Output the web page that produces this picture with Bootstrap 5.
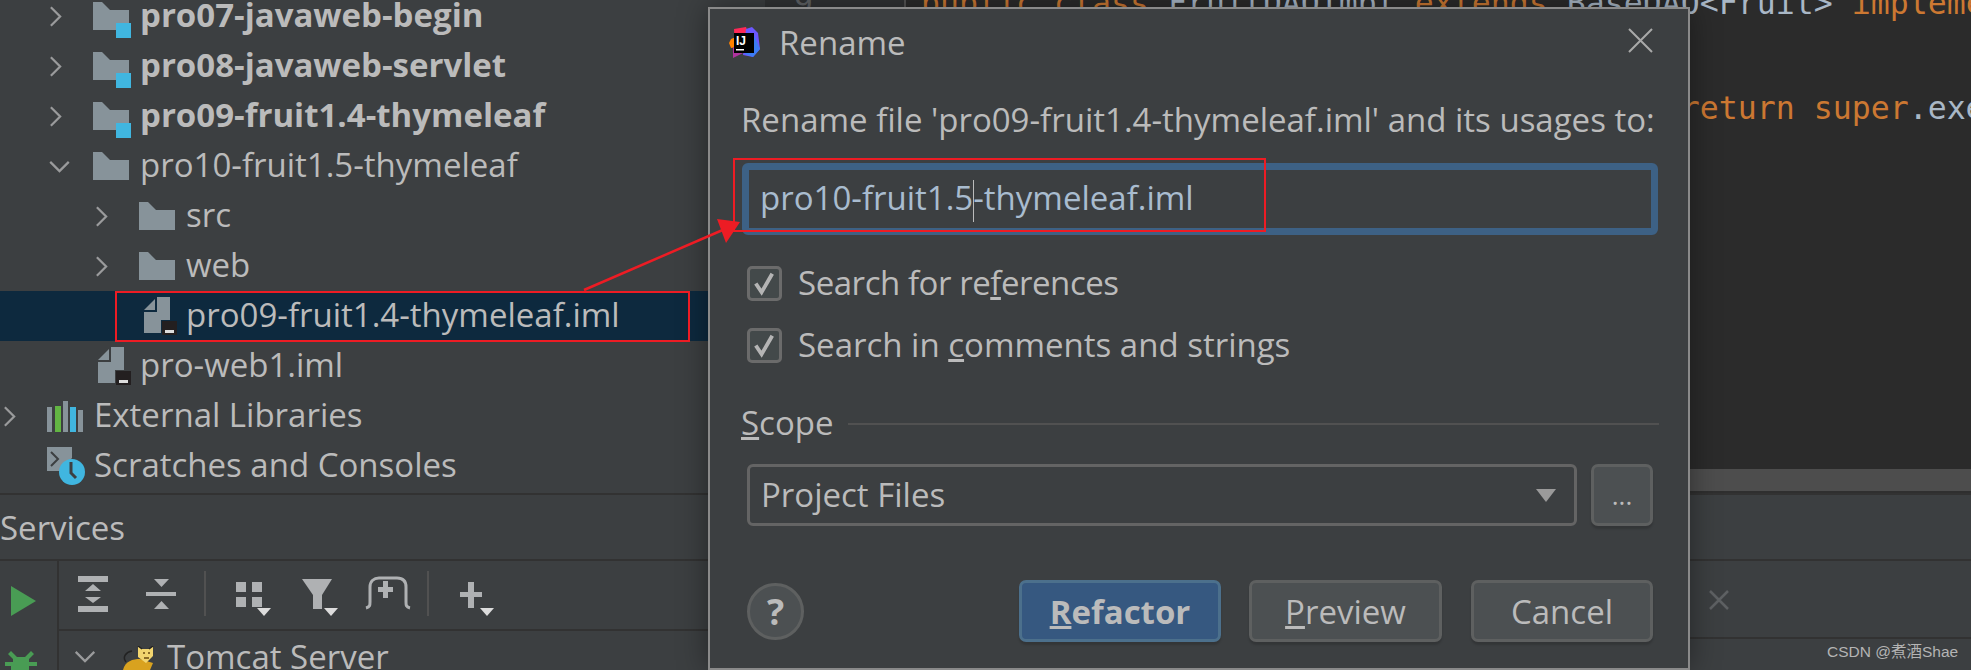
<!DOCTYPE html>
<html lang="en">
<head>
<meta charset="UTF-8">
<title>Rename</title>
<link href="https://cdn.jsdelivr.net/npm/bootstrap@5.3.0/dist/css/bootstrap.min.css" rel="stylesheet">
<script src="https://cdn.jsdelivr.net/npm/bootstrap@5.3.0/dist/js/bootstrap.bundle.min.js"></script>
<style>
html, body { width: 1971px; height: 670px; overflow: hidden; background: #3c3f41; }
body { font-family: "Open Sans", "Noto Sans", sans-serif; font-size: 33px; color: #bbb; position: relative; }
svg { display: block; flex: none; }

/* project tree */
.ide-top { height: 493px; }
.tree-pane { width: 765px; flex: none; overflow: hidden; }
.tree-list { margin-top: -9px; }
.tree-row { height: 50px; white-space: nowrap; }
.tree-row > span { position: relative; top: -1px; }
.tree-row.is-sel { background: #0d293e; }
.lv-1 { padding-left: 46px; }
.lv-2 { padding-left: 92px; }
.chev-slot { width: 47px; padding-left: 3px; flex: none; }
.icon-slot { width: 47px; flex: none; position: relative; line-height: 0; }
.file-shift { margin-left: 5px; }
.fw-mod { font-weight: 700; }
.mod-dot { position: absolute; left: 23px; top: 21px; width: 15px; height: 15px; background: #40b6e0; }

/* editor */
.gutter { width: 141px; flex: none; background: #313335; border-right: 2px solid #555; color: #606366; font-family: "DejaVu Sans Mono", monospace; font-size: 31.5px; line-height: 52px; overflow: hidden; }
.gutter-num { margin-top: -23px; padding-left: 29px; }
.editor { background: #2b2b2b; min-width: 0; border-bottom: 2px solid #2f2f2f; }
.code-area { padding-left: 15px; margin-top: -23px; font-family: "DejaVu Sans Mono", monospace; font-size: 31.55px; line-height: 52px; color: #a9b7c6; white-space: pre; overflow: hidden; }
.code-gap { height: 53px; }
.kw { color: #cc7832; }
.h-scroll { height: 22px; background: #4d4d4d; flex: none; }

/* services */
.svc-head { height: 68px; border-top: 2px solid #323232; border-bottom: 2px solid #323232; line-height: 65px; }
.svc-rail { width: 59px; flex: none; border-right: 2px solid #323232; }
.rail-play { margin: 25px 0 0 11px; }
.rail-bug { margin: 35px 0 0 5px; }
.svc-main { min-width: 0; }
.svc-bar { height: 70px; border-bottom: 2px solid #323232; }
.svc-right { width: 282px; flex: none; }
.svc-right-bar { height: 78px; border-bottom: 2px solid #323232; padding: 29px 0 0 20px; }
.svc-tree-row { padding: 0 0 0 14px; height: 38px; white-space: nowrap; }
.tomcat-ico { margin: 15px 0 0 26px; }
.tomcat-chev { margin-top: 19px; }
.tomcat-name { margin-left: 10px; line-height: 52px; }

/* rename dialog */
.rn-dialog { position: absolute; left: 708px; top: 7px; width: 982px; height: 663px; background: #3c3f41; border: 2px solid #8a8a8a; box-shadow: 0 0 28px rgba(0,0,0,.4); padding: 18px 29px 0 31px; }
.rn-title { height: 31px; }
.rn-logo { margin-left: -12px; }
.rn-title-text { margin-left: 19px; }
.rn-close { margin-left: auto; margin-top: -4px; margin-right: 6px; }
.rn-label { height: 40px; line-height: 40px; margin-top: 42px; white-space: nowrap; }
.rn-input.form-control { margin: 23px 0 0 1px; height: 72px; width: 916px; padding: 0 0 0 11px; background: #3c3f41; border: 7px solid #3d6185; border-radius: 6px; color: #a9bccf; font-size: 33px; line-height: 56px; white-space: nowrap; box-shadow: none; }
.rn-caret { display: inline-block; width: 0; height: 42px; border-left: 1.5px solid #bbb; vertical-align: middle; margin: 0 -1px 0 0; }
.rn-checks .form-check { display: flex; align-items: center; height: 40px; margin: 0 0 0 6px; padding: 0; }
.rn-checks .form-check:first-child { margin-top: 28px; }
.rn-checks .form-check + .form-check { margin-top: 22px; }
.rn-check.form-check-input { width: 35px; height: 35px; margin: 0 16px 0 0; float: none; background-color: #43494a; border: 3px solid #6b6b6b; border-radius: 5px; background-size: 100%; box-shadow: none; opacity: 1; flex: none; }
.rn-check.form-check-input:checked { background-color: #43494a; border-color: #6b6b6b; background-image: url("data:image/svg+xml,%3csvg xmlns='http://www.w3.org/2000/svg' viewBox='0 0 30 30'%3e%3cpath fill='none' stroke='%23b4b4b4' stroke-width='4' d='M6 15l6 9 11-19'/%3e%3c/svg%3e"); }
.rn-check-label { color: #bbb; opacity: 1; }
.rn-check-label, .rn-check { cursor: default; }
.rn-tight { letter-spacing: -.45px; }
.rn-scope { height: 40px; line-height: 40px; margin-top: 38px; }
.rn-rule { height: 2px; background: #515151; margin: 2px 0 0 14px; }
.rn-scope-row { margin: 21px 6px 0 6px; gap: 14px; }
.rn-select.form-select { flex: 1 1 auto; width: auto; height: 62px; padding: 0 0 0 11px; background-color: #3c3f41; border: 3px solid #646464; border-radius: 6px; color: #bbb; font-size: 33px; box-shadow: none; background-size: 20px 13px; background-position: right 18px center; background-image: url("data:image/svg+xml,%3csvg xmlns='http://www.w3.org/2000/svg' viewBox='0 0 20 13'%3e%3cpath fill='%239a9a9a' d='M0 0h20L10 13z'/%3e%3c/svg%3e"); }
.rn-btn.btn { background: #4c5052; border: 3px solid #5e6060; border-radius: 7px; color: #bbb; font-size: 33px; height: 62px; line-height: 1; padding: 0; box-shadow: 0 3px 2px rgba(0,0,0,.15); }
.rn-more.btn { width: 62px; line-height: 56px; font-size: 26px; }
.rn-foot { margin: 54px 6px 0 6px; }
.rn-help.btn { width: 57px; height: 57px; border-radius: 50%; background: #4c5052; border: 3px solid #5e6060; color: #bbb; font-size: 36px; font-weight: 700; line-height: 1; padding: 0; margin-top: 3px; }
.rn-ok.btn { background: #365880; border-color: #4c708c; font-weight: 700; width: 202px; margin-left: auto; }
.rn-prev.btn { width: 193px; margin-left: 28px; }
.rn-cancel.btn { width: 182px; margin-left: 29px; }

/* red markup drawn over the screenshot */
.mark-box { position: absolute; border: 2px solid #ed1c24; pointer-events: none; }
.mark-row { left: 115px; top: 291px; width: 575px; height: 51px; }
.mark-input { left: 733px; top: 158px; width: 533px; height: 74px; }
.mark-arrow { position: absolute; left: 570px; top: 210px; }
.wm { position: absolute; left: 1827px; top: 641px; font: 15.5px/22px "Liberation Sans", "Noto Sans CJK SC", sans-serif; color: #b4b4b4; white-space: nowrap; }
</style>
</head>
<body>
<svg width="0" height="0" class="position-absolute">
  <defs>
    <symbol id="chev-r" viewBox="0 0 14 22"><path d="M2 1l10 10L2 21" fill="none" stroke="#9a9b9c" stroke-width="2.4"/></symbol>
    <symbol id="chev-d" viewBox="0 0 22 14"><path d="M1 2l10 10L21 2" fill="none" stroke="#9a9b9c" stroke-width="2.4"/></symbol>
    <symbol id="folder" viewBox="0 0 36 28"><path d="M0 0h9l8 8h19v20H0z" fill="#87939a"/></symbol>
    <symbol id="file-ico" viewBox="0 0 33 38"><path d="M0 13L11 2v11z" fill="#87939a"/><path d="M13 0h13v23h-9v13H0V15h13z" fill="#87939a"/><path d="M18 24h15v15H18z" fill="#231f20"/><path d="M21 33h9v3h-9z" fill="#ddd"/></symbol>
  </defs>
</svg>

<div class="ide-top d-flex">
  <div class="tree-pane">
    <div class="tree-list">
      <div class="tree-row lv-1 d-flex align-items-center">
        <div class="chev-slot"><svg width="13" height="21"><use href="#chev-r"/></svg></div>
        <div class="icon-slot"><svg width="36" height="28"><use href="#folder"/></svg><span class="mod-dot"></span></div>
        <span class="fw-mod">pro07-javaweb-begin</span>
      </div>
      <div class="tree-row lv-1 d-flex align-items-center">
        <div class="chev-slot"><svg width="13" height="21"><use href="#chev-r"/></svg></div>
        <div class="icon-slot"><svg width="36" height="28"><use href="#folder"/></svg><span class="mod-dot"></span></div>
        <span class="fw-mod">pro08-javaweb-servlet</span>
      </div>
      <div class="tree-row lv-1 d-flex align-items-center">
        <div class="chev-slot"><svg width="13" height="21"><use href="#chev-r"/></svg></div>
        <div class="icon-slot"><svg width="36" height="28"><use href="#folder"/></svg><span class="mod-dot"></span></div>
        <span class="fw-mod">pro09-fruit1.4-thymeleaf</span>
      </div>
      <div class="tree-row lv-1 d-flex align-items-center">
        <div class="chev-slot"><svg width="21" height="13"><use href="#chev-d"/></svg></div>
        <div class="icon-slot"><svg width="36" height="28"><use href="#folder"/></svg></div>
        <span>pro10-fruit1.5-thymeleaf</span>
      </div>
      <div class="tree-row lv-2 d-flex align-items-center">
        <div class="chev-slot"><svg width="13" height="21"><use href="#chev-r"/></svg></div>
        <div class="icon-slot"><svg width="36" height="28"><use href="#folder"/></svg></div>
        <span>src</span>
      </div>
      <div class="tree-row lv-2 d-flex align-items-center">
        <div class="chev-slot"><svg width="13" height="21"><use href="#chev-r"/></svg></div>
        <div class="icon-slot"><svg width="36" height="28"><use href="#folder"/></svg></div>
        <span>web</span>
      </div>
      <div class="tree-row is-sel lv-2 d-flex align-items-center">
        <div class="chev-slot"></div>
        <div class="icon-slot"><svg class="file-shift" width="33" height="38"><use href="#file-ico"/></svg></div>
        <span>pro09-fruit1.4-thymeleaf.iml</span>
      </div>
      <div class="tree-row lv-1 d-flex align-items-center">
        <div class="chev-slot"></div>
        <div class="icon-slot"><svg class="file-shift" width="33" height="38"><use href="#file-ico"/></svg></div>
        <span>pro-web1.iml</span>
      </div>
      <div class="tree-row d-flex align-items-center">
        <div class="chev-slot"><svg width="13" height="21"><use href="#chev-r"/></svg></div>
        <div class="icon-slot">
          <svg width="36" height="31" viewBox="0 0 36 31"><path d="M0 6h5v25H0zM24 6h5v25h-5z M31 9h5v22h-5z" fill="#87939a"/><path d="M8 5h6v26H8z" fill="#62b543"/><path d="M16 0h5v31h-5z" fill="#87939a"/><path d="M23 6h6v25h-6z" fill="#40b6e0"/></svg>
        </div>
        <span>External Libraries</span>
      </div>
      <div class="tree-row d-flex align-items-center">
        <div class="chev-slot"></div>
        <div class="icon-slot">
          <svg width="38" height="38" viewBox="0 0 38 38"><path d="M0 0h25v11L13 24H0z" fill="#87939a"/><path d="M4 5l7 7-7 7" fill="none" stroke="#3c3f41" stroke-width="2"/><circle cx="25" cy="25" r="13" fill="#40b6e0"/><path d="M24 15v11l5 5" fill="none" stroke="#3c3f41" stroke-width="3"/></svg>
        </div>
        <span>Scratches and Consoles</span>
      </div>
    </div>
  </div>
  <div class="gutter"><div class="gutter-num">9</div></div>
  <div class="editor flex-grow-1 d-flex flex-column">
    <div class="code-area flex-grow-1"><span class="kw">public class</span> FruitDAOImpl <span class="kw">extends</span> BaseDAO&lt;Fruit&gt; <span class="kw">implements</span>
<div class="code-gap"></div>                                        <span class="kw">return super</span>.exec</div>
    <div class="h-scroll"></div>
  </div>
</div>

<div class="svc-head">Services</div>
<div class="d-flex">
  <div class="svc-rail">
    <svg class="rail-play" width="25" height="30" viewBox="0 0 25 30"><path d="M0 0l25 15L0 30z" fill="#499c54"/></svg>
    <svg class="rail-bug" width="32" height="20" viewBox="0 0 32 20"><path d="M6 0l6 6h8l6-6 3 3-5 5v3h8v4h-8v4H6v-4H0v-4h8V8L3 3z" fill="#499c54"/></svg>
  </div>
  <div class="svc-main flex-grow-1">
    <div class="svc-bar">
      <svg width="500" height="70" viewBox="0 0 500 70">
        <g fill="#afb1b3">
          <path d="M19 15h30v6H19zM19 45h30v6H19zM26 30l8-7 8 7zM26 36h16l-8 6z"/>
          <path d="M87 31h30v4H87zM95 18h15l-7.500 8zM95 48h15l-7.500-8z"/>
          <path d="M177 21h10v10h-10zM193 21h10v10h-10zM177 36h10v10h-10zM193 36h10v10h-10z"/>
          <path d="M243 18h30l-10 16v14h-9V34z"/>
          <path d="M319 24h5v-6h5v6h5v5h-5v6h-5v-6h-5z" transform="translate(0 2)"/>
          <path d="M411 31h8v-10h6v10h8v5h-8v11h-6V36h-8z" transform="translate(-10 0)"/>
        </g>
        <path d="M307 47c4-1 4-3 4-6V26c0-6 4-9 9-9h18c6 0 9 3 9 9v15c0 3 0 5 4 6" fill="none" stroke="#afb1b3" stroke-width="3"/>
        <path d="M145 10h2v45h-2zM368 10h2v45h-2z" fill="#515151"/>
        <g fill="#dcdcdc">
          <path d="M198 47h14l-7 8zM265 47h14l-7 8zM421 47h14l-7 8z"/>
        </g>
      </svg>
    </div>
    <div class="svc-tree-row d-flex align-items-start">
      <svg class="tomcat-chev" width="24" height="13"><use href="#chev-d"/></svg>
      <svg class="tomcat-ico" width="34" height="24" viewBox="0 0 34 24"><path d="M0 24c2-9 10-11 17-11l13 4-3 7z" fill="#d9a21f"/><path d="M3 16c-4-5 0-10 6-11" fill="none" stroke="#222" stroke-width="1.500"/><path d="M15 0l4 3h7l4-3v10l-7 7-8-6z" fill="#f2d56f"/><path d="M15 0l4 3M30 0l-4 3" stroke="#222" stroke-width="1.500"/><path d="M20 7h2M25 7h2M21 12h5" stroke="#6b4a10" stroke-width="1.500"/></svg>
      <span class="tomcat-name">Tomcat Server</span>
    </div>
  </div>
  <div class="svc-right">
    <div class="svc-right-bar"><svg width="20" height="20" viewBox="0 0 20 20"><path d="M1 1l18 18M19 1L1 19" stroke="#5e6163" stroke-width="2.500"/></svg></div>
  </div>
</div>

<div class="rn-dialog">
  <div class="rn-title d-flex align-items-center">
    <svg class="rn-logo" width="31" height="31" viewBox="0 0 31 31">
      <path d="M5 2l12-2 3 8-14 15z" fill="#fe2857"/>
      <path d="M17 2l6-2 6 6 2 16-7 8-10-2z" fill="#6b57ff"/>
      <path d="M24 6l7 16-7 8-8-3z" fill="#3b7cf5"/>
      <path d="M2 12l5-2 1 10-6 1-2-5z" fill="#ff8100"/>
      <path d="M4 20l12 5-12 6z" fill="#b0339f"/>
      <path d="M5 6h20v20H5z" fill="#000"/>
      <text x="7" y="18" font-family="Liberation Sans, sans-serif" font-weight="700" font-size="12" fill="#fff">IJ</text>
      <path d="M7 22h8v1.500H7z" fill="#fff"/>
    </svg>
    <span class="rn-title-text">Rename</span>
    <svg class="rn-close" width="25" height="25" viewBox="0 0 25 25"><path d="M1 1l23 23M24 1L1 24" stroke="#a9a9a9" stroke-width="2"/></svg>
  </div>
  <div class="rn-label">Rename file 'pro09-fruit1.4-thymeleaf.iml' and its usages to:</div>
  <div class="rn-input form-control">pro10-fruit1.5<span class="rn-caret"></span>-thymeleaf.iml</div>
  <div class="rn-checks">
    <div class="form-check">
      <input class="rn-check form-check-input" type="checkbox" id="chkRefs" checked>
      <label class="rn-check-label rn-tight form-check-label" for="chkRefs">Search for re<u>f</u>erences</label>
    </div>
    <div class="form-check">
      <input class="rn-check form-check-input" type="checkbox" id="chkComments" checked>
      <label class="rn-check-label form-check-label" for="chkComments">Search in <u>c</u>omments and strings</label>
    </div>
  </div>
  <div class="rn-scope d-flex align-items-center">
    <span><u>S</u>cope</span>
    <div class="rn-rule flex-grow-1"></div>
  </div>
  <div class="rn-scope-row d-flex">
    <select class="rn-select form-select"><option>Project Files</option></select>
    <button class="rn-btn rn-more btn" type="button">...</button>
  </div>
  <div class="rn-foot d-flex align-items-start">
    <button class="rn-help btn" type="button">?</button>
    <button class="rn-btn rn-ok btn" type="button"><u>R</u>efactor</button>
    <button class="rn-btn rn-prev btn" type="button"><u>P</u>review</button>
    <button class="rn-btn rn-cancel btn" type="button">Cancel</button>
  </div>
</div>

<div class="mark-box mark-row"></div>
<div class="mark-box mark-input"></div>
<svg class="mark-arrow" width="175" height="85" viewBox="0 0 175 85">
  <path d="M14 80L155 19" stroke="#ed1c24" stroke-width="2.500"/>
  <path d="M170 12l-23-3 9 24z" fill="#ed1c24"/>
</svg>
<div class="wm">CSDN @煮酒Shae</div>
</body>
</html>
